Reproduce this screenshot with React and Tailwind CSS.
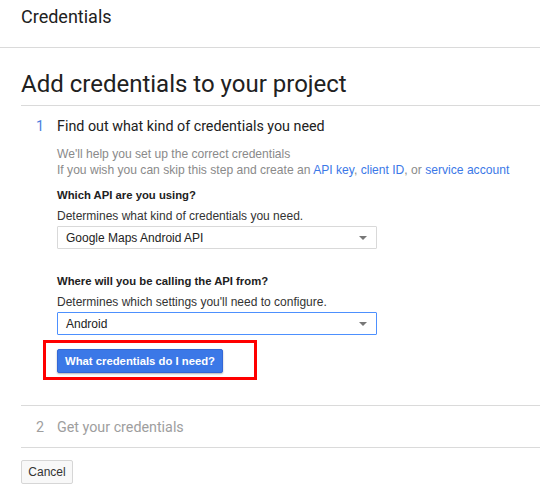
import React from "react";

const roboto = { fontFamily: "Roboto, 'Liberation Sans', sans-serif" };

const Select = ({ value, active }) => (
  <div
    className={`flex items-center justify-between h-[23px] w-[320px] mt-[2px] pl-[8px] pr-[9px] bg-white border rounded-[1px] text-[12px] text-[#222] ${
      active ? "border-[#4d90fe]" : "border-[#d9d9d9]"
    }`}
  >
    <span>{value}</span>
    <span className="w-0 h-0 border-l-[4px] border-r-[4px] border-t-[4px] border-l-transparent border-r-transparent border-t-[#777]" />
  </div>
);

const App = () => {
  return (
    <div className="w-[540px] min-h-[493px] bg-white overflow-hidden font-['Liberation_Sans',Arial,sans-serif]">
      {/* Top bar */}
      <div
        style={roboto}
        className="h-[48px] border-b border-[#dadada] pl-[21px] pt-[5px] text-[18px] leading-[24px] text-[#212121]"
      >
        Credentials
      </div>

      <div className="pl-[21px]">
        <h1
          style={roboto}
          className="pt-[20px] pb-[5px] text-[24px] leading-[32px] text-[#212121] border-b border-[#dadada]"
        >
          Add credentials to your project
        </h1>

        {/* Step 1 */}
        <div className="pb-[32px] border-b border-[#dadada]">
          <div style={roboto} className="flex mt-[10px] text-[14.3px] leading-[20px]">
            <span className="w-[36px] pl-[15px] text-[#4a7fe0]">1</span>
            <span className="text-[#212121]">Find out what kind of credentials you need</span>
          </div>

          <div className="pl-[36px]">
            <div className="mt-[10px] text-[12.1px] leading-[16px] text-[#8a8a8a]">
              <p>We'll help you set up the correct credentials</p>
              <p>
                If you wish you can skip this step and create an{" "}
                <a className="text-[#3b78e7]">API key</a>,{" "}
                <a className="text-[#3b78e7]">client ID</a>, or{" "}
                <a className="text-[#3b78e7]">service account</a>
              </p>
            </div>

            <p className="mt-[9px] text-[11.3px] leading-[16px] font-bold text-[#212121]">
              Which API are you using?
            </p>
            <p className="mt-[5px] text-[12px] leading-[16px] text-[#333]">
              Determines what kind of credentials you need.
            </p>
            <Select value="Google Maps Android API" />

            <p className="mt-[24px] text-[11.3px] leading-[16px] font-bold text-[#212121]">
              Where will you be calling the API from?
            </p>
            <p className="mt-[5px] text-[12px] leading-[16px] text-[#333]">
              Determines which settings you'll need to configure.
            </p>
            <Select value="Android" active />

            <div className="relative inline-block mt-[13px]">
              <button className="h-[24px] w-[166px] rounded-[2px] bg-[#3b78e7] border border-[#3367d6] shadow-[0_1px_2px_rgba(0,0,0,0.3)] text-[11.3px] font-bold text-white">
                What credentials do I need?
              </button>
              <span className="absolute -left-[14px] -top-[8px] w-[214px] h-[40px] border-[3px] border-[#ff0000] pointer-events-none" />
            </div>
          </div>
        </div>

        {/* Step 2 */}
        <div
          style={roboto}
          className="flex pt-[11px] pb-[10px] text-[14.3px] leading-[20px] text-[#9e9e9e] border-b border-[#dadada]"
        >
          <span className="w-[36px] pl-[15px]">2</span>
          <span>Get your credentials</span>
        </div>

        <button className="mt-[12px] h-[24px] w-[52px] rounded-[2px] border border-[#d6d6d6] bg-[#f8f8f8] text-[12px] text-[#333]">
          Cancel
        </button>
      </div>
    </div>
  );
};

export default App;
